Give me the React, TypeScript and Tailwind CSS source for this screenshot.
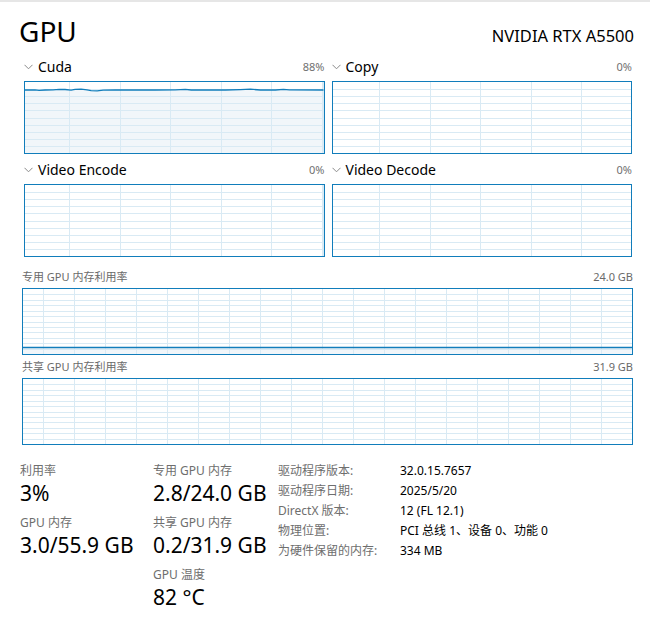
import React from "react";

const FONT = '"Noto Sans", "Noto Sans CJK SC", sans-serif';
const GRID = "#d9eaf4";
const FILL = "#f1f6fa";
const LINE = "#117dbb";

function Chevron() {
  return (
    <svg width="9" height="6" viewBox="0 0 9 6" className="mr-[5px] shrink-0">
      <polyline points="0.5,0.8 4.5,4.8 8.5,0.8" fill="none" stroke="#8a8a8a" strokeWidth="1" />
    </svg>
  );
}

type GraphProps = {
  w: number;
  h: number;
  rows: number;
  vStart: number;
  vStep: number;
  fill?: string;
  line?: string;
  heightClass: string;
};

function Graph({ w, h, rows, vStart, vStep, fill, line, heightClass }: GraphProps) {
  const hs: number[] = [];
  for (let i = 1; i < rows; i++) hs.push(Math.round((i * h) / rows) + 0.5);
  const vs: number[] = [];
  for (let x = vStart; x < w; x += vStep) vs.push(Math.round(x) + 0.5);
  return (
    <div className={`${heightClass} border border-[#117dbb] bg-white`}>
      <svg className="block w-full h-full" viewBox={`0 0 ${w} ${h}`} preserveAspectRatio="none">
        {fill && <path d={fill} fill={FILL} />}
        {hs.map((y) => (
          <line key={"h" + y} x1={0} x2={w} y1={y} y2={y} stroke={GRID} strokeWidth={1} shapeRendering="crispEdges" />
        ))}
        {vs.map((x) => (
          <line key={"v" + x} x1={x} x2={x} y1={0} y2={h} stroke={GRID} strokeWidth={1} shapeRendering="crispEdges" />
        ))}
        {line && <path d={line} fill="none" stroke={LINE} strokeWidth={1.3} />}
      </svg>
    </div>
  );
}

const cudaPts: [number, number][] = [
  [0, 8.0], [10, 7.8], [14, 8.4], [20, 8.0], [28, 7.8], [34, 7.3], [40, 7.5], [46, 8.1],
  [50, 7.3], [56, 7.1], [62, 7.8], [66, 8.6], [72, 8.8], [78, 8.2], [90, 8.0], [130, 8.0],
  [150, 7.8], [160, 7.3], [166, 8.0], [200, 8.0], [215, 7.6], [225, 7.2], [235, 8.0],
  [250, 8.0], [258, 7.4], [264, 7.8], [298, 8.0],
];
const cudaLine = "M" + cudaPts.map((p) => p.join(",")).join(" L");
const cudaFill = cudaLine + " L298,71 L0,71 Z";

function SmallPanel({ title, pct, vStart, line, fill }: { title: string; pct: string; vStart: number; line?: string; fill?: string }) {
  return (
    <div className="flex flex-col">
      <div className="h-[28px] flex items-center">
        <Chevron />
        <span className="text-[14px] text-black leading-[20px]">{title}</span>
        <span className="ml-auto text-[11px] text-[#707070] leading-[16px]">{pct}</span>
      </div>
      <Graph w={298} h={71} rows={10} vStart={vStart} vStep={50.6} heightClass="h-[73px]" line={line} fill={fill} />
    </div>
  );
}

function WideLabel({ left, right }: { left: string; right: string }) {
  return (
    <div className="h-[23px] flex items-center justify-between text-[11px] leading-[16px] text-[#6a6a6a]">
      <span>{left}</span>
      <span>{right}</span>
    </div>
  );
}

function Stat({ label, value, last }: { label: string; value: string; last?: boolean }) {
  return (
    <div className={last ? "" : "mb-[7px]"}>
      <div className="h-[18px] text-[12px] leading-[18px] text-[#6e6e6e]">{label}</div>
      <div className="h-[27px] text-[21px] leading-[27px] text-black whitespace-nowrap">{value}</div>
    </div>
  );
}

const info: [string, string][] = [
  ["驱动程序版本:", "32.0.15.7657"],
  ["驱动程序日期:", "2025/5/20"],
  ["DirectX 版本:", "12 (FL 12.1)"],
  ["物理位置:", "PCI 总线 1、设备 0、功能 0"],
  ["为硬件保留的内存:", "334 MB"],
];

export default function App() {
  return (
    <div
      className="w-[650px] h-[617px] overflow-hidden bg-white border-t-2 border-[#e6e6e6]"
      style={{ fontFamily: FONT }}
    >
      <div className="h-[51px] pt-[14px] pl-[19px] pr-[16px] flex items-baseline justify-between">
        <span className="text-[28px] leading-[30px] text-black">GPU</span>
        <span className="text-[16.5px] leading-[18px] text-black">NVIDIA RTX A5500</span>
      </div>

      <div className="pl-[24px] pr-[18px] grid grid-cols-2 gap-x-[7px] gap-y-[2px]">
        <SmallPanel title="Cuda" pct="88%" vStart={44} line={cudaLine} fill={cudaFill} />
        <SmallPanel title="Copy" pct="0%" vStart={46} />
        <SmallPanel title="Video Encode" pct="0%" vStart={44} />
        <SmallPanel title="Video Decode" pct="0%" vStart={46} />
      </div>

      <div className="pl-[22px] pr-[17px] mt-[8px]">
        <WideLabel left="专用 GPU 内存利用率" right="24.0 GB" />
        <Graph
          w={609}
          h={65}
          rows={12}
          vStart={20}
          vStep={31}
          heightClass="h-[67px]"
          line="M0,58.5 L609,58.5"
          fill="M0,58.5 L609,58.5 L609,65 L0,65 Z"
        />
        <WideLabel left="共享 GPU 内存利用率" right="31.9 GB" />
        <Graph w={609} h={65} rows={12} vStart={20} vStep={31} heightClass="h-[67px]" />
      </div>

      <div className="flex pt-[17px]">
        <div className="w-[153px] pl-[20px] shrink-0">
          <Stat label="利用率" value="3%" />
          <Stat label="GPU 内存" value="3.0/55.9 GB" />
        </div>
        <div className="w-[125px] shrink-0">
          <Stat label="专用 GPU 内存" value="2.8/24.0 GB" />
          <Stat label="共享 GPU 内存" value="0.2/31.9 GB" />
          <Stat label="GPU 温度" value="82 °C" last />
        </div>
        <div className="flex-1 -mt-[1px]">
          {info.map(([k, v]) => (
            <div key={k} className="h-[20px] flex items-center text-[12px] leading-[18px]">
              <span className="w-[122px] shrink-0 text-[#6e6e6e]">{k}</span>
              <span className="text-black">{v}</span>
            </div>
          ))}
        </div>
      </div>
    </div>
  );
}
